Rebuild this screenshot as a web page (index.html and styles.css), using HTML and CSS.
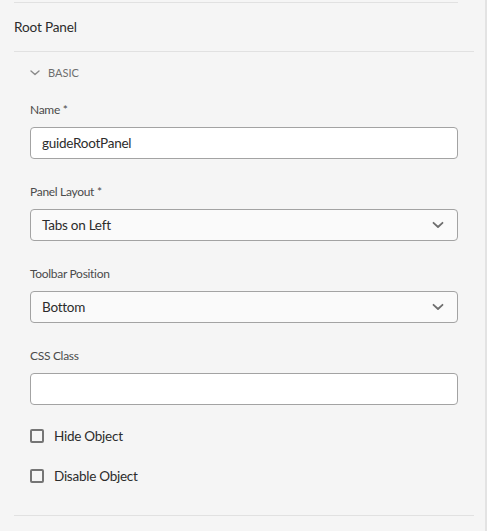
FILE: index.html
```html
<!DOCTYPE html>
<html lang="en">
<head>
<meta charset="utf-8">
<title>Root Panel</title>
<link rel="stylesheet" href="styles.css">
</head>
<body>
<div class="panel">
  <div class="rule rule-top"></div>
  <div class="title">Root Panel</div>
  <div class="rule rule-wide"></div>
  <div class="section">
    <div class="section-head">
      <svg class="caret" width="10" height="6" viewBox="0 0 10 6"><path d="M1 1 L5 4.6 L9 1" fill="none" stroke="#8a8a8a" stroke-width="1.4" stroke-linecap="round" stroke-linejoin="round"/></svg>
      <span class="section-name">BASIC</span>
    </div>
    <div class="fields">
      <div class="field">
        <label class="label">Name *</label>
        <div class="input">guideRootPanel</div>
      </div>
      <div class="field">
        <label class="label">Panel Layout *</label>
        <div class="input select">
          <span>Tabs on Left</span>
          <svg class="chev" width="12" height="8" viewBox="0 0 12 8"><path d="M1.5 1.8 L6 6 L10.5 1.8" fill="none" stroke="#6e6e6e" stroke-width="1.8" stroke-linecap="round" stroke-linejoin="round"/></svg>
        </div>
      </div>
      <div class="field">
        <label class="label">Toolbar Position</label>
        <div class="input select">
          <span>Bottom</span>
          <svg class="chev" width="12" height="8" viewBox="0 0 12 8"><path d="M1.5 1.8 L6 6 L10.5 1.8" fill="none" stroke="#6e6e6e" stroke-width="1.8" stroke-linecap="round" stroke-linejoin="round"/></svg>
        </div>
      </div>
      <div class="field">
        <label class="label">CSS Class</label>
        <div class="input"></div>
      </div>
    </div>
    <div class="checks">
      <div class="check"><span class="box"></span><span class="check-label">Hide Object</span></div>
      <div class="check"><span class="box"></span><span class="check-label">Disable Object</span></div>
    </div>
  </div>
  <div class="rule rule-wide rule-bottom"></div>
</div>
</body>
</html>
```
FILE: styles.css
```css
* { box-sizing: border-box; }
html, body { margin: 0; padding: 0; }
body {
  background: #f5f5f5;
  font-family: Lato, "Noto Sans", "Liberation Sans", sans-serif;
  color: #2c2c2c;
}
.panel {
  width: 487px;
  height: 531px;
  border-right: 2px solid #e3e3e3;
  padding-top: 2px;
}
.rule {
  height: 0;
  border-top: 1px solid #e1e1e1;
  margin-left: 14px;
}
.rule-top { width: 444px; }
.rule-wide { width: 460px; }
.title {
  height: 48px;
  display: flex;
  align-items: center;
  padding-left: 14px;
  font-size: 13.6px;
  letter-spacing: -0.15px;
  color: #2c2c2c;
}
.section { padding-left: 30px; }
.section-head {
  height: 41px;
  display: flex;
  align-items: center;
  gap: 8px;
}
.section-name {
  font-size: 11px;
  color: #6e6e6e;
}
.caret { display: block; }
.fields {
  display: flex;
  flex-direction: column;
  gap: 24px;
  padding-top: 8px;
  width: 428px;
}
.field {
  display: flex;
  flex-direction: column;
  gap: 9px;
}
.label {
  font-size: 12px;
  line-height: 17px;
  letter-spacing: -0.3px;
  color: #4b4b4b;
}
.input {
  height: 32px;
  background: #ffffff;
  border: 1px solid #a3a3a3;
  border-radius: 4px;
  padding: 0 11px;
  display: flex;
  align-items: center;
  font-size: 13.5px;
  letter-spacing: -0.25px;
  color: #2c2c2c;
}
.select {
  background: #fafafa;
  justify-content: space-between;
  padding-right: 13px;
}
.chev { display: block; }
.checks {
  display: flex;
  flex-direction: column;
  gap: 20px;
  padding-top: 21px;
  padding-bottom: 29px;
}
.check {
  height: 20px;
  display: flex;
  align-items: center;
  gap: 10px;
}
.box {
  width: 14px;
  height: 14px;
  border: 2px solid #757575;
  border-radius: 2px;
  background: #f5f5f5;
}
.check-label {
  font-size: 13.5px;
  letter-spacing: -0.25px;
  color: #2c2c2c;
}
```
